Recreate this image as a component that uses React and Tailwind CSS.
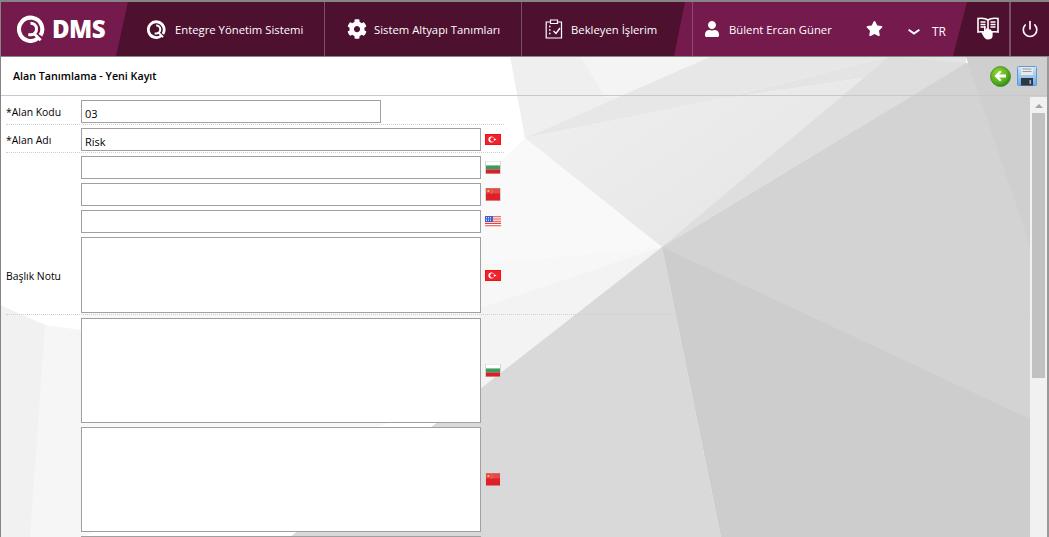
import { FaCog, FaStar, FaUser } from 'react-icons/fa'
import { Power } from 'lucide-react'

function QMark({ size = 28 }) {
  return (
    <svg width={size} height={size} viewBox="0 0 26 26" fill="none" stroke="white">
      <path d="M19.5 21.6A10.8 10.8 0 1 1 21.8 19" strokeWidth="3.8" />
      <path d="M12.5 7.6A5.4 5.4 0 0 1 13 18.4H10.5" strokeWidth="2.8" />
      <path d="M15.5 17L22 23.5" strokeWidth="2.6" />
    </svg>
  )
}

function ClipboardIcon() {
  return (
    <svg width="18" height="20" viewBox="0 0 18 20" fill="none" stroke="white" strokeWidth="1.2">
      <path d="M5 3H1.2V19H16.5V3H13" />
      <path d="M5.5 4.5V1H12.5V4.5Z" />
      <path d="M4 7.5H5.5M4 11H5.5M4 14.5H5.5" strokeWidth="1.6" />
      <path d="M8.5 12L11 14.5L15 9" strokeWidth="1.4" />
    </svg>
  )
}

function BookIcon() {
  return (
    <svg width="23" height="23" viewBox="0 0 23 23" fill="none" stroke="white">
      <path d="M11 3C9 1.5 5 1 1 1.5V15C5 14.6 9 15 11 16.2C13 15 17 14.6 21 15V1.5C17 1 13 1.5 11 3V16" strokeWidth="1.6" />
      <path d="M3.5 5H8.5M3.5 7.5H8.5M3.5 10H8.5M13.5 5H18.5M13.5 7.5H18.5M13.5 10H18.5" strokeWidth="1.3" />
      <path d="M7 9.5C7 8.6 8.6 8.6 8.6 9.5V13.5L9.2 11.5C10 11 10.6 11.4 10.8 12C11.5 11.6 12.2 11.8 12.4 12.5C13 12.2 14 12.4 14 13.5C14.5 13.5 15.6 14 15.6 15.5V19C15.6 21.5 13.5 22.5 11 22.5C8.5 22.5 7 20.5 6 18.5L4.4 15.4C4.2 14.4 5.2 14 6 14.8L7 16Z" fill="white" stroke="none" />
    </svg>
  )
}

function BackIcon() {
  return (
    <svg width="21" height="21" viewBox="0 0 21 21">
      <defs>
        <radialGradient id="backFill" cx="0.4" cy="0.35" r="0.7">
          <stop offset="0" stopColor="#9ed93a" />
          <stop offset="0.65" stopColor="#55ae1e" />
          <stop offset="1" stopColor="#2d8012" />
        </radialGradient>
      </defs>
      <circle cx="10.5" cy="10.5" r="10" fill="url(#backFill)" stroke="#3d8a1c" strokeWidth="0.8" />
      <path d="M10 4.5L4.5 10L10 15.5L11.5 14L9 11.5H16V8.5H9L11.5 6Z" fill="white" />
    </svg>
  )
}

function SaveIcon() {
  return (
    <svg width="20" height="20" viewBox="0 0 20 20">
      <defs>
        <linearGradient id="saveFill" x1="0" y1="0" x2="0" y2="1">
          <stop offset="0" stopColor="#cfe6fb" />
          <stop offset="1" stopColor="#6ea9e4" />
        </linearGradient>
      </defs>
      <path d="M0.5 1.5Q0.5 0.5 1.5 0.5H18.5Q19.5 0.5 19.5 1.5V18.5Q19.5 19.5 18.5 19.5H1.5Q0.5 19.5 0.5 18.5Z" fill="url(#saveFill)" stroke="#5d9adb" />
      <rect x="4" y="1" width="12" height="8" fill="#e9e9e9" />
      <path d="M5.5 3H14.5M5.5 5.5H14.5" stroke="#9a9a9a" strokeWidth="1.2" />
      <rect x="4" y="12" width="12" height="7.5" fill="#2e3640" />
      <rect x="12.5" y="14" width="1.6" height="4" fill="#8ab6e0" />
    </svg>
  )
}

function Flag({ code }) {
  if (code === 'tr') {
    return (
      <svg width="16" height="11" viewBox="0 0 16 11" className="shrink-0">
        <rect width="16" height="11" fill="#f0222b" />
        <rect x="0.5" y="0.5" width="15" height="10" fill="none" stroke="#f50f15" />
        <circle cx="6.4" cy="5.5" r="3" fill="white" />
        <circle cx="7.4" cy="5.5" r="2.2" fill="#f0222b" />
        <path d="M8.8 4.2L11.6 5.5L8.8 6.8Z" fill="white" />
      </svg>
    )
  }
  if (code === 'bg') {
    return (
      <svg width="16" height="13" viewBox="0 0 16 13" className="shrink-0">
        <rect width="16" height="13" fill="#d4d4d4" />
        <rect x="1" y="0.5" width="14" height="4" fill="white" />
        <rect x="1" y="4.5" width="14" height="4" fill="#3f9a5e" />
        <rect x="1" y="8.5" width="14" height="4" fill="#d8202a" />
      </svg>
    )
  }
  if (code === 'cn') {
    return (
      <svg width="16" height="13" viewBox="0 0 16 13" className="shrink-0">
        <rect width="16" height="13" fill="#d4d4d4" />
        <rect x="1" y="0.5" width="14" height="12" fill="#df2029" />
        <rect x="1" y="0.5" width="14" height="5" fill="#e34a4e" />
        <circle cx="3.4" cy="3" r="1.1" fill="#f8d92a" />
        <path d="M6 1.5h0.8v0.8h-0.8zM7 3h0.8v0.8h-0.8zM6 4.6h0.8v0.8h-0.8z" fill="#eeb02a" />
      </svg>
    )
  }
  return (
    <svg width="16" height="11" viewBox="0 0 16 11" className="shrink-0">
      <rect width="16" height="11" fill="white" />
      <path d="M0 0.8H16M0 3H16M0 5.2H16M0 7.4H16M0 9.8H16" stroke="#e2453f" strokeWidth="1.1" />
      <rect width="8" height="6" fill="#3f5fd0" />
      <path d="M1 1.5H7M1 3H7M1 4.5H7" stroke="white" strokeWidth="0.7" strokeDasharray="1 1" />
    </svg>
  )
}

function Background() {
  return (
    <svg className="absolute left-0 top-0" width="1046" height="480" viewBox="1 57 1046 480">
      <defs>
        <linearGradient id="midPane" x1="0" y1="0" x2="1" y2="0.6">
          <stop offset="0" stopColor="#f0f0f0" />
          <stop offset="1" stopColor="#e4e4e4" />
        </linearGradient>
      </defs>
      <rect x="0" y="57" width="1049" height="480" fill="#ffffff" />
      <polygon points="81,300 480,264 662,247 480,389 81,537" fill="#f8f8f8" />
      <polygon points="0,305 45,325 81,330 81,537 0,537" fill="#f6f6f6" />
      <polygon points="0,305 45,325 30,537 0,537" fill="#f1f1f1" />
      <polygon points="525,138 662,247 480,264 481,180" fill="#f9f9f9" />
      <polygon points="662,247 480,264 480,308" fill="#f7f7f7" />
      <polygon points="662,247 480,308 480,389" fill="#f3f3f3" />
      <polygon points="510,56 712,56 525,138" fill="#efefef" />
      <polygon points="580,56 712,56 620,97 605,97" fill="#f4f4f4" />
      <polygon points="525,138 720,99 966,63 662,247" fill="url(#midPane)" />
      <polygon points="525,138 712,56 890,56 720,99" fill="#e7e7e7" />
      <polygon points="890,56 966,56 966,63 720,99" fill="#e4e4e4" />
      <polygon points="662,247 890,56 966,63" fill="#dedede" />
      <polygon points="966,63 1049,56 1049,537 721,537 662,247" fill="#d3d3d3" />
      <polygon points="966,57 1049,57 1049,290 1030,246" fill="#cfcfcf" />
      <polygon points="662,247 1030,419 1049,427 1049,537 721,537" fill="#cdcdcd" />
      <polygon points="662,247 721,537 290,537 480,389" fill="#d9d9d9" />
    </svg>
  )
}

function Row({ label, flag, dotted, first, children }) {
  return (
    <div className={`flex w-[498px] items-center ${dotted ? 'border-b border-dotted border-[#cfcfcf]' : ''} ${first ? 'mt-[3px] pb-[1px]' : ''}`}>
      <div className="w-[75px] pt-[2px] text-[10.4px] leading-none text-black">{label}</div>
      {children}
      {flag && <div className="ml-1 flex w-[16px] justify-center"><Flag code={flag} /></div>}
    </div>
  )
}

function TextBox({ value, width = 'w-[400px]' }) {
  return (
    <input
      defaultValue={value}
      className={`${width} h-[23px] border border-[#a0a0a0] bg-white px-[3px] pt-[3px] text-[11px] text-black outline-none`}
    />
  )
}

function TextArea({ height }) {
  return <textarea className={`${height} block w-[400px] resize-none border border-[#a0a0a0] bg-white outline-none`} />
}

function NavItem({ icon, label, width, iconWidth }) {
  return (
    <div className={`flex h-full items-center border-r border-[#7a5069] ${width}`}>
      <div className={`flex justify-center ${iconWidth}`}>{icon}</div>
      <span className="mt-[2px] text-[11.3px] text-white">{label}</span>
    </div>
  )
}

export default function App() {
  return (
    <div className="flex h-[537px] w-full flex-col overflow-hidden border-l border-t-2 border-[#858585] bg-white [font-family:'Open_Sans',sans-serif]">
      <header className="flex h-[55px] shrink-0 border-b border-[#888888] bg-[#4e102f]">
        <div className="flex w-[127px] items-center gap-[7px] bg-[#751a4c] pl-[16px] [clip-path:polygon(0_0,100%_0,115px_100%,0_100%)]">
          <QMark />
          <span className="text-[24px] font-extrabold leading-none tracking-[-0.5px] text-white">DMS</span>
        </div>
        <NavItem icon={<QMark size={19} />} label="Entegre Yönetim Sistemi" width="w-[197px]" iconWidth="w-[47px] pl-[15px] pr-[5px]" />
        <NavItem icon={<FaCog size={20} color="white" />} label="Sistem Altyapı Tanımları" width="w-[197px]" iconWidth="w-[49px] pl-[22px] pr-[7px]" />
        <div className="flex h-full w-[152px] items-center">
          <div className="flex w-[49px] justify-end pr-[8px]"><ClipboardIcon /></div>
          <span className="mt-[2px] text-[11.3px] text-white">Bekleyen İşlerim</span>
        </div>
        <div className="flex h-full w-[293px] items-center bg-[#751a4c] pl-[18px] text-white [clip-path:polygon(11px_0,100%_0,279px_100%,0_100%)]">
          <div className="flex h-full items-center border-l border-[#8d4a70] pl-[11px]">
            <FaUser size={16} />
            <span className="ml-[9px] mt-[2px] w-[137px] text-[11.3px]">Bülent Ercan Güner</span>
            <FaStar size={17} className="-mt-[2px]" />
            <svg width="12" height="6" viewBox="0 0 12 6" fill="none" stroke="white" strokeWidth="2" className="ml-[25px] mt-[5px]">
              <path d="M0.6 0.8L6 4.6L11.4 0.8" />
            </svg>
            <span className="ml-[12px] mt-[6px] text-[12px]">TR</span>
          </div>
        </div>
        <div className="flex h-full w-[42px] items-start justify-start pl-[10px] pt-[15px]">
          <BookIcon />
        </div>
        <div className="flex h-full flex-1 items-center justify-center border-l-2 border-[#7a5069] pr-[1px]">
          <Power size={18} color="white" strokeWidth={2.2} />
        </div>
      </header>

      <main className="relative flex min-h-0 flex-1 flex-col border-r-2 border-[#999999]">
        <Background />
        <div className="relative flex h-[39px] shrink-0 items-center justify-between border-b border-[#c8c8c8] pl-[12px] pr-[10px]">
          <span className="text-[10.7px] font-semibold text-black">Alan Tanımlama - Yeni Kayıt</span>
          <div className="flex items-center gap-[6px]">
            <BackIcon />
            <SaveIcon />
          </div>
        </div>

        <div className="relative flex min-h-0 flex-1">
          <div className="flex-1 pl-[5px] pt-[1px]">
            <Row label="*Alan Kodu" dotted first>
              <TextBox value="03" width="w-[300px]" />
            </Row>
            <Row label="*Alan Adı" flag="tr" dotted first>
              <TextBox value="Risk" />
            </Row>
            <div className="mt-[3px] flex flex-col gap-[4px]">
              <Row flag="bg"><TextBox /></Row>
              <Row flag="cn"><TextBox /></Row>
              <Row flag="us"><TextBox /></Row>
              <div className="border-b border-dotted border-[#cfcfcf] pb-[1px]">
                <Row label="Başlık Notu" flag="tr"><TextArea height="h-[76px]" /></Row>
              </div>
            </div>
            <div className="mt-[3px] flex flex-col gap-[4px]">
              <Row flag="bg"><TextArea height="h-[105px]" /></Row>
              <Row flag="cn"><TextArea height="h-[105px]" /></Row>
              <Row><TextArea height="h-[105px]" /></Row>
            </div>
          </div>
          <div className="mt-[1px] flex w-[17px] shrink-0 flex-col items-center bg-[#f1f1f1]">
            <div className="mt-[7px] h-0 w-0 border-x-[4px] border-b-[4px] border-x-transparent border-b-[#a3a3a3]" />
            <div className="mt-[5px] h-[265px] w-[13px] bg-[#c1c1c1]" />
          </div>
        </div>
      </main>
    </div>
  )
}
